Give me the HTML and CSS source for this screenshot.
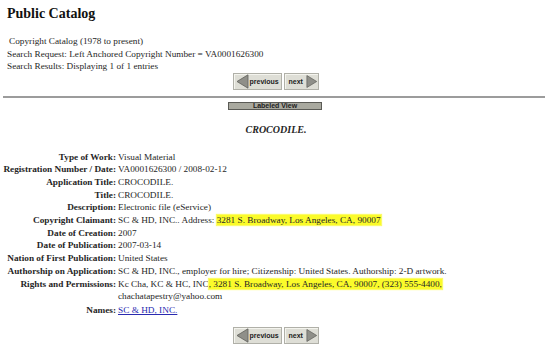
FILE: index.html
```html
<!DOCTYPE html>
<html>
<head>
<meta charset="utf-8">
<link rel="stylesheet" href="styles.css">
</head>
<body>
<h1 class="title">Public Catalog</h1>
<div class="meta">
  <div class="line first">Copyright Catalog (1978 to present)</div>
  <div class="line">Search Request: Left Anchored Copyright Number = VA0001626300</div>
  <div class="line">Search Results: Displaying 1 of 1 entries</div>
</div>
<div class="nav top">
  <span class="btn prev"><svg width="13" height="15" viewBox="0 0 13 15"><polygon points="1,7.5 12,0.8 12,14.2" fill="#8f8f89" stroke="#60605a" stroke-width="0.8"/></svg><b>previous</b></span>
  <span class="btn next"><b>next</b><svg width="13" height="15" viewBox="0 0 13 15"><polygon points="12,7.5 1,0.8 1,14.2" fill="#8f8f89" stroke="#60605a" stroke-width="0.8"/></svg></span>
</div>
<div class="rule"></div>
<div class="viewbar"><span class="tab">Labeled View</span></div>
<div class="work">CROCODILE.</div>
<div class="record">
  <div class="lbl">Type of Work:</div><div class="val">Visual Material</div>
  <div class="lbl">Registration Number / Date:</div><div class="val">VA0001626300 / 2008-02-12</div>
  <div class="lbl">Application Title:</div><div class="val">CROCODILE.</div>
  <div class="lbl">Title:</div><div class="val">CROCODILE.</div>
  <div class="lbl">Description:</div><div class="val">Electronic file (eService)</div>
  <div class="lbl">Copyright Claimant:</div><div class="val">SC &amp; HD, INC.. Address: <span class="hl">3281 S. Broadway, Los Angeles, CA, 90007</span></div>
  <div class="lbl">Date of Creation:</div><div class="val">2007</div>
  <div class="lbl">Date of Publication:</div><div class="val">2007-03-14</div>
  <div class="lbl">Nation of First Publication:</div><div class="val">United States</div>
  <div class="lbl">Authorship on Application:</div><div class="val">SC &amp; HD, INC., employer for hire; Citizenship: United States. Authorship: 2-D artwork.</div>
  <div class="lbl">Rights and Permissions:</div><div class="val">Kc Cha, KC &amp; HC, INC<span class="hl">, 3281 S. Broadway, Los Angeles, CA, 90007, (323) 555-4400,</span><br>chachatapestry@yahoo.com</div>
  <div class="lbl names">Names:</div><div class="val names"><a href="#">SC &amp; HD, INC.</a></div>
</div>
<div class="nav bottom">
  <span class="btn prev"><svg width="13" height="15" viewBox="0 0 13 15"><polygon points="1,7.5 12,0.8 12,14.2" fill="#8f8f89" stroke="#60605a" stroke-width="0.8"/></svg><b>previous</b></span>
  <span class="btn next"><b>next</b><svg width="13" height="15" viewBox="0 0 13 15"><polygon points="12,7.5 1,0.8 1,14.2" fill="#8f8f89" stroke="#60605a" stroke-width="0.8"/></svg></span>
</div>
</body>
</html>
```
FILE: styles.css
```css
html, body { margin: 0; padding: 0; background: #fff; }
body {
  font-family: "Liberation Serif", "Times New Roman", serif;
  font-size: 9.25px;
  color: #262626;
  width: 550px;
  height: 351px;
  overflow: hidden;
}
.title {
  margin: 0;
  padding: 5px 0 0 7px;
  font-size: 14px;
  line-height: 18px;
  font-weight: bold;
  color: #111;
}
.meta { padding: 12px 0 0 7px; }
.line { line-height: 12.5px; }
.line.first { padding-left: 2px; }
.nav {
  display: flex;
  justify-content: center;
  gap: 2px;
  padding-left: 1px;
}
.nav.top { margin-top: 0; }
.nav.bottom { margin-top: 10px; }
.btn {
  display: inline-flex;
  align-items: center;
  height: 17px;
  box-sizing: border-box;
  background: #deded6;
  border: 1px solid #b0b0a8;
  box-shadow: inset 1px 1px 0 #f4f4ee;
  font-family: "Liberation Sans", Arial, sans-serif;
  font-size: 7px;
  color: #222;
}
.btn.prev { width: 49px; padding-left: 2px; gap: 1px; }
.btn.next { width: 35px; padding-left: 4px; gap: 3px; }
.rule {
  margin: 6px 5px 0 3px;
  height: 2px;
  background: #9c9c9c;
}
.viewbar { display: flex; justify-content: center; margin-top: 4px; }
.tab {
  width: 94px;
  height: 8px;
  box-sizing: border-box;
  background: #a9a99f;
  border: 1px solid #5a5a55;
  font-family: "Liberation Sans", Arial, sans-serif;
  font-size: 7px;
  font-weight: bold;
  line-height: 6px;
  text-align: center;
  color: #222;
}
.work {
  text-align: center;
  font-weight: bold;
  font-style: italic;
  font-size: 10px;
  line-height: 12px;
  margin-top: 14px;
  padding-left: 2px;
}
.record {
  display: grid;
  grid-template-columns: 116px 1fr;
  column-gap: 2px;
  margin-top: 15px;
  line-height: 12.7px;
}
.lbl { text-align: right; font-weight: bold; white-space: nowrap; }
.val { white-space: nowrap; }
.lbl.names, .val.names { padding-top: 1.5px; }
.val a { color: #2a2ab0; }
.hl {
  background: #fbfb2a;
  box-shadow: 0 0 1px 1px #fbfb6a;
}
```
